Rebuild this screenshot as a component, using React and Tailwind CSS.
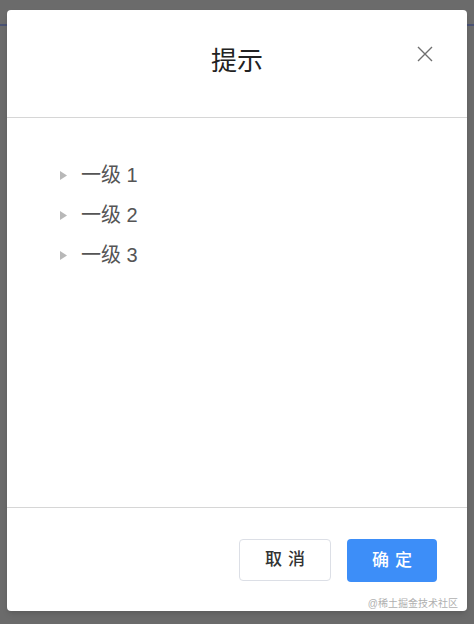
import React from "react";

const items = ["一级 1", "一级 2", "一级 3"];

export default function App() {
  return (
    <div
      className="relative w-[474px] h-[624px] bg-[#6b6b6b] overflow-hidden pt-[10px] px-[7px]"
      style={{ fontFamily: '"Liberation Sans", "Noto Sans CJK SC", sans-serif' }}
    >
      {/* page underneath the overlay */}
      <div className="absolute left-0 right-0 top-[24px] h-[2px] bg-[#4a5273]" />

      <div className="relative flex flex-col w-[460px] h-[601px] bg-white rounded-[4px] shadow-md">
        <div className="relative flex items-center justify-center h-[108px] border-b border-[#d6d6d6]">
          <span className="text-[26px] leading-none text-[#222] -mt-[5px]">提示</span>
          <svg
            className="absolute right-[34px] top-[36px]"
            width="16"
            height="16"
            viewBox="0 0 16 16"
            fill="none"
            stroke="#6f6f6f"
            strokeWidth="1.4"
          >
            <path d="M1 1 L15 15 M15 1 L1 15" />
          </svg>
        </div>

        <div className="flex-1 pt-[37px] pl-[52px]">
          {items.map((label) => (
            <div key={label} className="flex items-center h-[40px]">
              <svg width="9" height="11" viewBox="0 0 9 11" className="mr-[13px]">
                <path d="M1 1 L8 5.5 L1 10 Z" fill="#b8b8b8" />
              </svg>
              <span className="text-[20px] leading-none text-[#555]">{label}</span>
            </div>
          ))}
        </div>

        <div className="flex items-start justify-end gap-[16px] h-[104px] border-t border-[#d6d6d6] pt-[31px] pr-[30px]">
          <button className="w-[92px] h-[42px] rounded-[4px] border border-[#dcdfe6] bg-white text-[17px] font-medium text-[#333] tracking-[6px] pl-[6px]">
            取消
          </button>
          <button className="w-[90px] h-[43px] rounded-[4px] bg-[#3d8ef8] text-[17px] font-medium text-white tracking-[6px] pl-[6px]">
            确定
          </button>
        </div>

        <span className="absolute right-[9px] bottom-[2px] text-[10px] leading-none text-[#b0b0b0]">
          @稀土掘金技术社区
        </span>
      </div>
    </div>
  );
}
